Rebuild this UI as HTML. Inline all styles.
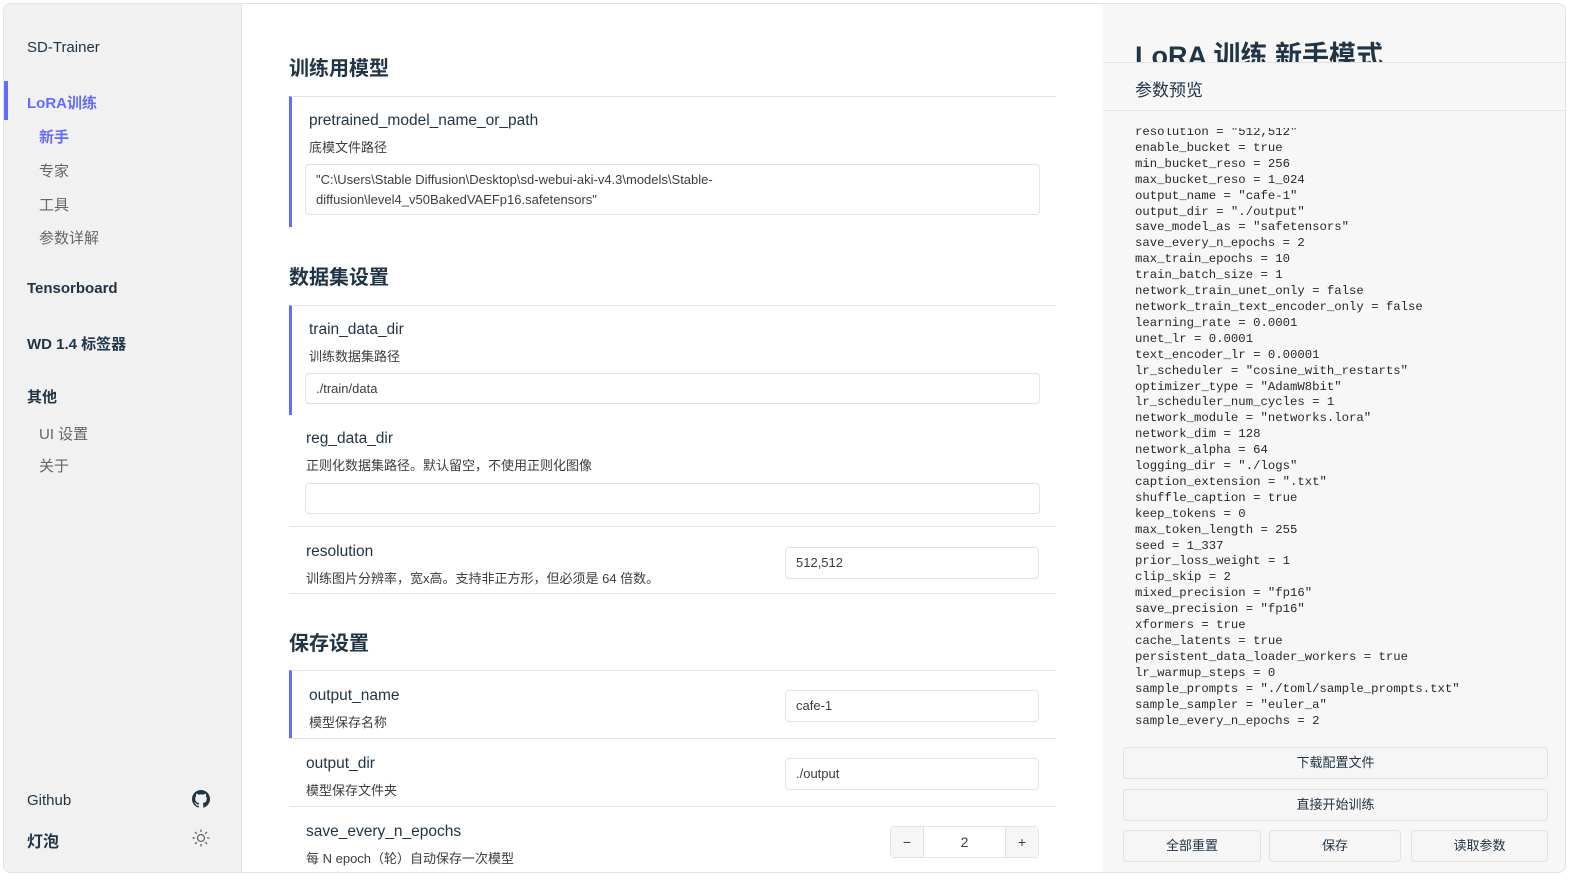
<!DOCTYPE html>
<html><head><meta charset="utf-8"><style>
*{box-sizing:border-box;margin:0;padding:0}
body{width:1580px;height:880px;overflow:hidden;background:#fff;font-family:"Liberation Sans","Noto Sans CJK SC",sans-serif;color:#213547;position:relative}
.a{position:absolute}
#frame{position:absolute;left:3px;top:3px;width:1563px;height:870px;border:1px solid #e2e2e3;border-radius:8px;overflow:hidden;background:#fff}
#side{position:absolute;left:0;top:0;width:238px;height:870px;background:#f1f1f1;border-right:1px solid #e2e2e3}
.nav{position:absolute;font-size:15px;color:#213547}
.sub{position:absolute;font-size:15px;color:#666;left:35px}
#right{position:absolute;left:1099px;top:0;width:464px;height:870px;background:#f7f7f7}
h2{position:absolute;left:285px;font-size:20px;font-weight:bold;color:#213547}
.blk{position:absolute;left:285px;width:767px;border-top:1px solid #e2e2e3}
.bar{border-left:3px solid #646cff}
.nm{position:absolute;left:17px;font-size:15.5px;color:#213547}
.ds{position:absolute;left:17px;font-size:13px;color:#3c3c43}
.inp{position:absolute;border:1px solid #e2e2e3;border-radius:4px;background:#fff;font-size:13px;color:#3c3c43;padding-left:10px}
pre{position:absolute;left:32px;top:121px;font-family:"Liberation Mono",monospace;font-size:12.3px;line-height:15.9px;color:#24292f}
.btn{position:absolute;border:1px solid #e2e2e3;border-radius:4px;background:#f6f6f7;font-size:13px;text-align:center;line-height:30px;color:#213547}
</style></head><body>
<div id="frame">
<div id="side">
<div class="nav" style="left:23px;top:35px">SD-Trainer</div>
<div class="a" style="left:0;top:77px;width:4px;height:39px;background:#646cff"></div>
<div class="nav" style="left:23px;top:88px;color:#646cff;font-weight:bold">LoRA训练</div>
<div class="sub" style="top:122px;color:#646cff;font-weight:bold">新手</div>
<div class="sub" style="top:156px">专家</div>
<div class="sub" style="top:190px">工具</div>
<div class="sub" style="top:223px">参数详解</div>
<div class="nav" style="left:23px;top:276px;font-weight:bold">Tensorboard</div>
<div class="nav" style="left:23px;top:329px;font-weight:bold">WD 1.4 标签器</div>
<div class="nav" style="left:23px;top:382px;font-weight:bold">其他</div>
<div class="sub" style="top:419px">UI 设置</div>
<div class="sub" style="top:451px">关于</div>
<div class="nav" style="left:23px;top:788px">Github</div>
<svg class="a" style="left:188px;top:786px" width="18" height="18" viewBox="0 0 16 16"><path fill="#213547" d="M8 0C3.58 0 0 3.58 0 8c0 3.540 2.29 6.53 5.47 7.59.4.07.55-.17.55-.38v-1.33c-2.23.48-2.7-1.07-2.7-1.070-.36-.92-.89-1.17-.89-1.17-.73-.5.06-.49.06-.49.8.06 1.23.83 1.23.83.71 1.22 1.87.87 2.33.66.07-.52.28-.87.51-1.07-1.78-.2-3.65-.89-3.65-3.95 0-.87.31-1.59.82-2.150-.08-.2-.36-1.02.08-2.12 0 0 .67-.21 2.2.82a7.6 7.6 0 014 0c1.53-1.04 2.2-.82 2.2-.82.44 1.1.16 1.92.08 2.12.51.56.82 1.27.82 2.15 0 3.07-1.87 3.75-3.65 3.95.29.25.54.73.54 1.48v2.2c0 .21.15.46.55.38A8 8 0 0016 8c0-4.42-3.58-8-8-8z"/></svg>
<div class="nav" style="left:23px;top:824px;font-size:16px;font-weight:bold">灯泡</div>
<svg class="a" style="left:187px;top:824px" width="20" height="20" viewBox="0 0 20 20" stroke="#666" stroke-width="1.3" fill="none"><circle cx="10" cy="10" r="3.5"/><path d="M10 1.5v2.5M10 16v2.5M1.5 10h2.5M16 10h2.5M4 4l1.8 1.8M14.2 14.2L16 16M4 16l1.8-1.8M14.2 5.8L16 4"/></svg>
</div>

<h2 style="top:48px">训练用模型</h2>
<div class="blk bar" style="top:92px;height:131px">
<div class="nm" style="top:15px">pretrained_model_name_or_path</div>
<div class="ds" style="top:40px">底模文件路径</div>
<div class="inp" style="left:13px;top:67px;width:735px;height:51px;line-height:20px;padding-top:5px">"C:\Users\Stable Diffusion\Desktop\sd-webui-aki-v4.3\models\Stable-<br>diffusion\level4_v50BakedVAEFp16.safetensors"</div>
</div>
<h2 style="top:257px">数据集设置</h2>
<div class="blk bar" style="top:301px;height:110px">
<div class="nm" style="top:15px">train_data_dir</div>
<div class="ds" style="top:40px">训练数据集路径</div>
<div class="inp" style="left:13px;top:67px;width:735px;height:31px;line-height:29px">./train/data</div>
</div>
<div class="blk" style="top:411px;height:112px;border-top:none">
<div class="nm" style="top:15px;left:17px">reg_data_dir</div>
<div class="ds" style="top:40px;left:17px">正则化数据集路径。默认留空，不使用正则化图像</div>
<div class="inp" style="left:16px;top:68px;width:735px;height:31px"></div>
</div>
<div class="blk" style="top:522px;height:68px">
<div class="nm" style="top:16px">resolution</div>
<div class="ds" style="top:41px">训练图片分辨率，宽x高。支持非正方形，但必须是 64 倍数。</div>
<div class="inp" style="left:496px;top:20px;width:254px;height:32px;line-height:30px">512,512</div>
</div>
<div class="blk" style="top:589px;height:1px"></div>
<h2 style="top:623px">保存设置</h2>
<div class="blk bar" style="top:666px;height:68px">
<div class="nm" style="top:16px">output_name</div>
<div class="ds" style="top:41px">模型保存名称</div>
<div class="inp" style="left:493px;top:19px;width:254px;height:32px;line-height:30px">cafe-1</div>
</div>
<div class="blk" style="top:734px;height:68px">
<div class="nm" style="top:16px">output_dir</div>
<div class="ds" style="top:41px">模型保存文件夹</div>
<div class="inp" style="left:496px;top:19px;width:254px;height:32px;line-height:30px">./output</div>
</div>
<div class="blk" style="top:802px;height:68px">
<div class="nm" style="top:16px">save_every_n_epochs</div>
<div class="ds" style="top:41px">每 N epoch（轮）自动保存一次模型</div>
<div class="a" style="left:601px;top:19px;width:149px;height:32px;border:1px solid #e2e2e3;border-radius:4px;background:#fff;display:flex;font-size:14px;color:#3c3c43">
<div style="width:33px;background:#f6f6f7;border-right:1px solid #e2e2e3;text-align:center;line-height:30px">−</div>
<div style="flex:1;text-align:center;line-height:30px">2</div>
<div style="width:33px;background:#f6f6f7;border-left:1px solid #e2e2e3;text-align:center;line-height:30px">+</div>
</div>
</div>

<div id="right">
<div class="a" style="left:32px;top:34px;height:24px;overflow:hidden;font-size:27px;font-weight:bold;color:#213547;line-height:36px">LoRA 训练 新手模式</div>
<div class="a" style="left:0;top:58px;width:464px;height:49px;border-top:1px solid #e2e2e3;border-bottom:1px solid #e2e2e3;background:#f7f7f7"></div>
<div class="a" style="left:32px;top:72px;font-size:17px;color:#213547">参数预览</div>
<div class="a" style="left:0;top:124px;width:464px;height:605px;overflow:hidden">
<pre style="top:-3px">resolution = "512,512"
enable_bucket = true
min_bucket_reso = 256
max_bucket_reso = 1_024
output_name = "cafe-1"
output_dir = "./output"
save_model_as = "safetensors"
save_every_n_epochs = 2
max_train_epochs = 10
train_batch_size = 1
network_train_unet_only = false
network_train_text_encoder_only = false
learning_rate = 0.0001
unet_lr = 0.0001
text_encoder_lr = 0.00001
lr_scheduler = "cosine_with_restarts"
optimizer_type = "AdamW8bit"
lr_scheduler_num_cycles = 1
network_module = "networks.lora"
network_dim = 128
network_alpha = 64
logging_dir = "./logs"
caption_extension = ".txt"
shuffle_caption = true
keep_tokens = 0
max_token_length = 255
seed = 1_337
prior_loss_weight = 1
clip_skip = 2
mixed_precision = "fp16"
save_precision = "fp16"
xformers = true
cache_latents = true
persistent_data_loader_workers = true
lr_warmup_steps = 0
sample_prompts = "./toml/sample_prompts.txt"
sample_sampler = "euler_a"
sample_every_n_epochs = 2</pre></div>
<div class="btn" style="left:20px;top:743px;width:425px;height:32px">下载配置文件</div>
<div class="btn" style="left:20px;top:785px;width:425px;height:32px">直接开始训练</div>
<div class="btn" style="left:20px;top:826px;width:138px;height:32px">全部重置</div>
<div class="btn" style="left:166px;top:826px;width:132px;height:32px">保存</div>
<div class="btn" style="left:308px;top:826px;width:137px;height:32px">读取参数</div>
</div>
</div>
</body></html>
